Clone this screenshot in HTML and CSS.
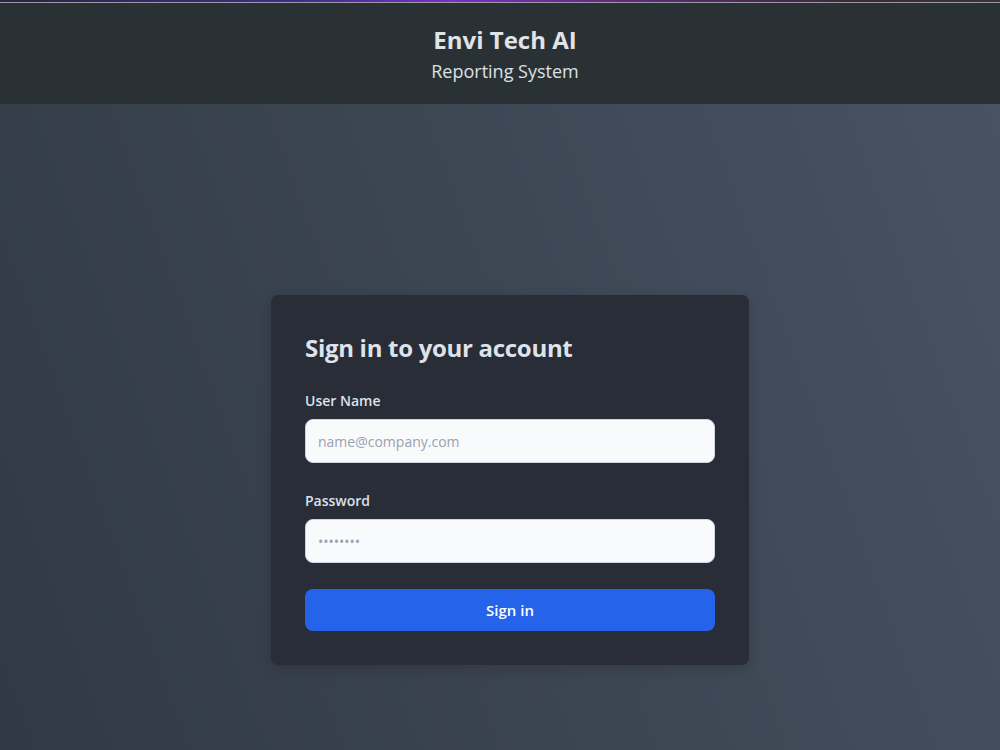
FILE: index.html
```html
<!DOCTYPE html>
<html lang="en">
<head>
<meta charset="utf-8">
<title>Envi Tech AI - Sign in</title>
<link rel="stylesheet" href="styles.css">
</head>
<body>
<div class="topline"></div>
<header class="header">
  <h1 class="brand">Envi Tech AI</h1>
  <p class="subtitle">Reporting System</p>
</header>
<main class="main">
  <form class="card">
    <h2 class="card-title">Sign in to your account</h2>
    <label class="label" for="user">User Name</label>
    <input class="input" id="user" type="text" placeholder="name@company.com">
    <label class="label label-pw" for="pw">Password</label>
    <input class="input" id="pw" type="password" placeholder="••••••••">
    <button class="btn" type="button">Sign in</button>
  </form>
</main>
</body>
</html>
```
FILE: styles.css
```css
* { box-sizing: border-box; }
html, body { margin: 0; padding: 0; height: 100%; }
body {
  font-family: "Open Sans", "Noto Sans", "Liberation Sans", sans-serif;
  display: flex;
  flex-direction: column;
  min-height: 750px;
  background: #2f3742;
}
.topline {
  height: 3px;
  background: linear-gradient(90deg, #2a2440 0%, #3b2f8a 30%, #7a2fc4 45%, #5a2a70 65%, #3a2a3a 85%, #3a3040 100%);
  border-bottom: 1px solid #9a9aa2;
}
.header {
  height: 101px;
  background: #2a3134;
  display: flex;
  flex-direction: column;
  align-items: center;
  padding-top: 21px;
  padding-left: 10px;
}
.brand {
  margin: 0;
  font-size: 24px;
  line-height: 32px;
  font-weight: 700;
  color: #e0e3e8;
}
.subtitle {
  margin: 0;
  padding-top: 2px;
  font-size: 18px;
  line-height: 26px;
  color: #dde0e5;
}
.main {
  flex: 1;
  display: flex;
  justify-content: center;
  align-items: flex-start;
  padding-top: 191px;
  padding-left: 20px;
  background: linear-gradient(70deg, #313946 0%, #3c4552 50%, #475363 100%);
}
.card {
  width: 478px;
  background: #282d38;
  border-radius: 7px;
  padding: 37px 34px 34px;
  display: flex;
  flex-direction: column;
  box-shadow: 0 4px 14px rgba(0,0,0,0.15);
}
.card-title {
  margin: 0 0 27px;
  font-size: 24px;
  line-height: 32px;
  font-weight: 700;
  color: #dfe3e9;
  letter-spacing: -0.3px;
}
.label {
  font-size: 14px;
  line-height: 20px;
  font-weight: 600;
  color: #dde1e7;
  margin-bottom: 8px;
}
.label-pw { margin-top: 28px; }
.input {
  height: 44px;
  width: 100%;
  border: 1px solid #cbd5e1;
  border-radius: 8px;
  background: #f8fafc;
  padding: 0 12px;
  font-family: inherit;
  font-size: 14px;
  color: #334155;
}
.input::placeholder { color: #9aa3af; }
.btn {
  margin-top: 26px;
  height: 42px;
  border: none;
  border-radius: 8px;
  background: #2563eb;
  color: #ffffff;
  font-family: inherit;
  font-size: 15px;
  font-weight: 600;
}
```
